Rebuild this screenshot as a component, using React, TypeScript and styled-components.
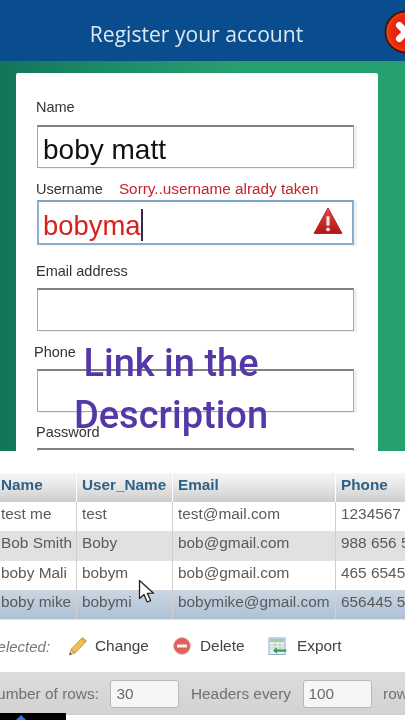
import React from 'react';
import styled, { createGlobalStyle } from 'styled-components';

const GlobalStyle = createGlobalStyle`
  html, body {
    margin: 0;
    padding: 0;
    background: #fff;
  }
`;

const rows = [
  { name: 'test me', user: 'test', email: 'test@mail.com', phone: '1234567', tone: 'plain' },
  { name: 'Bob Smith', user: 'Boby', email: 'bob@gmail.com', phone: '988 656 565', tone: 'grey' },
  { name: 'boby Mali', user: 'bobym', email: 'bob@gmail.com', phone: '465 6545', tone: 'plain' },
  { name: 'boby mike', user: 'bobymi', email: 'bobymike@gmail.com', phone: '656445 565', tone: 'picked' },
];

const CloseIcon = () => (
  <svg width="44" height="44" viewBox="0 0 46 46">
    <defs>
      <radialGradient id="closeFill" cx="0.55" cy="0.5" r="0.6">
        <stop offset="0" stopColor="#f01010" />
        <stop offset="0.7" stopColor="#e62a0c" />
        <stop offset="1" stopColor="#ee6a10" />
      </radialGradient>
    </defs>
    <circle cx="23" cy="23" r="21.5" fill="url(#closeFill)" stroke="#4a1410" strokeWidth="2" />
    <path d="M16 16 L30 30 M30 16 L16 30" stroke="#fff" strokeWidth="7" strokeLinecap="round" />
  </svg>
);

const WarningIcon = () => (
  <svg width="30" height="28" viewBox="0 0 30 28">
    <defs>
      <linearGradient id="warnFill" x1="0" y1="0" x2="0" y2="1">
        <stop offset="0" stopColor="#e04848" />
        <stop offset="1" stopColor="#b01818" />
      </linearGradient>
    </defs>
    <path d="M15 1 L29 26.5 L1 26.5 Z" fill="url(#warnFill)" stroke="#c02020" strokeLinejoin="round" />
    <rect x="13.4" y="9" width="3.2" height="10" rx="1.4" fill="#f4e0e0" />
    <circle cx="15" cy="22.4" r="1.9" fill="#f4e0e0" />
  </svg>
);

const PencilIcon = () => (
  <svg width="20" height="20" viewBox="0 0 20 20">
    <path d="M14.5 1.5 L18.5 5 L7 17 L3 13.5 Z" fill="#efc24a" stroke="#c8922a" strokeWidth="0.9" />
    <path d="M3 13.5 L7 17 L1.4 19 Z" fill="#ecc79a" stroke="#a87830" strokeWidth="0.6" />
    <path d="M1.4 19 L2.1 16.8 L3.7 18.2 Z" fill="#4a3418" />
    <path d="M14.5 1.5 L18.5 5 L17 6.5 L13 3 Z" fill="#e8a24c" />
  </svg>
);

const DeleteIcon = () => (
  <svg width="18" height="18" viewBox="0 0 18 18">
    <circle cx="9" cy="9" r="8.3" fill="#e2605a" stroke="#d8a098" strokeWidth="0.8" />
    <rect x="4" y="7.4" width="10" height="3.2" rx="0.6" fill="#fbeeee" />
  </svg>
);

const ExportIcon = () => (
  <svg width="19" height="19" viewBox="0 0 19 19">
    <rect x="1" y="1" width="16" height="16.5" fill="#e8f0f4" stroke="#8cb0c8" />
    <rect x="2" y="2" width="14" height="3" fill="#a8c8a8" />
    <path d="M2 8 H16 M2 11 H16 M7 5 V15 M12 5 V15" stroke="#b0c8b8" strokeWidth="0.8" />
    <path d="M5 13.6 L9 10.6 V12.6 H18.4 V14.8 H9 V16.8 Z" fill="#3f9a48" />
  </svg>
);

const CursorIcon = () => (
  <svg width="18" height="26" viewBox="0 0 18 26">
    <path
      d="M1.5 1.5 L1.5 19.5 L6 15.6 L9.2 23 L12.6 21.6 L9.4 14.4 L15.5 14.2 Z"
      fill="#fff"
      stroke="#222"
      strokeWidth="1.3"
      strokeLinejoin="round"
    />
  </svg>
);

const App: React.FC = () => {
  return (
    <Page>
      <GlobalStyle />
      <Header>
        <Title>Register your account</Title>
        <CloseButton>
          <CloseIcon />
        </CloseButton>
      </Header>

      <FormBand>
        <Card>
          <Label $top={0} $bottom={10}>Name</Label>
          <Field>boby matt</Field>

          <Label $top={13} $bottom={3}>
            Username <ErrorText>Sorry..username alrady taken</ErrorText>
          </Label>
          <Field $invalid>
            bobyma<Caret />
            <FieldIcon>
              <WarningIcon />
            </FieldIcon>
          </Field>

          <Label $top={18} $bottom={9}>Email address</Label>
          <Field />

          <Label $top={13} $bottom={9} $shift={-3}>Phone</Label>
          <Field />

          <Label $top={12} $bottom={8}>Password</Label>
          <Field />
        </Card>
        <Overlay>
          Link in the
          <br />
          Description
        </Overlay>
      </FormBand>

      <TableWrap>
        <HeadRow>
          <HeadCell>Name</HeadCell>
          <HeadCell>User_Name</HeadCell>
          <HeadCell>Email</HeadCell>
          <HeadCell>Phone</HeadCell>
        </HeadRow>
        {rows.map((row) => (
          <BodyRow key={row.user} $tone={row.tone}>
            <BodyCell>{row.name}</BodyCell>
            <BodyCell>{row.user}</BodyCell>
            <BodyCell>{row.email}</BodyCell>
            <BodyCell>{row.phone}</BodyCell>
          </BodyRow>
        ))}
        <Pointer>
          <CursorIcon />
        </Pointer>
      </TableWrap>

      <ActionBar>
        <SelectedText>With selected:</SelectedText>
        <Action $width={105} $gap={7}>
          <PencilIcon />
          Change
        </Action>
        <Action $width={95} $gap={9}>
          <DeleteIcon />
          Delete
        </Action>
        <Action $width={80} $gap={10}>
          <ExportIcon />
          Export
        </Action>
      </ActionBar>

      <RowsBar>
        <BarText>Number of rows:</BarText>
        <CountInput value="30" readOnly />
        <BarText>Headers every</BarText>
        <CountInput value="100" readOnly />
        <BarText>rows</BarText>
      </RowsBar>

      <BlackTab>
        <BlueBump />
      </BlackTab>
    </Page>
  );
};

const Page = styled.div`
  position: relative;
  width: 405px;
  height: 720px;
  overflow: hidden;
  background: #fff;
  font-family: 'Liberation Sans', Arial, sans-serif;
  filter: blur(0.4px);
`;

const Header = styled.header`
  position: relative;
  height: 61px;
  background: #0a4d8e;
  display: flex;
  align-items: center;
  justify-content: center;
  padding-right: 12px;
  box-sizing: border-box;
`;

const Title = styled.h1`
  margin: 0;
  padding-top: 6px;
  font-family: 'Open Sans', sans-serif;
  font-size: 21.1px;
  font-weight: 400;
  color: #dce8f0;
`;

const CloseButton = styled.div`
  position: absolute;
  left: 384px;
  top: 10px;
  width: 44px;
  height: 44px;
`;

const FormBand = styled.section`
  position: relative;
  height: 390px;
  padding: 12px 27px 0 16px;
  box-sizing: border-box;
  overflow: hidden;
  background: linear-gradient(90deg, #12755a 0%, #1b8a66 25%, #27a070 60%, #27a070 100%);
`;

const Card = styled.div`
  height: 378px;
  background: #fff;
  border-radius: 2px 2px 0 0;
  padding: 26px 24px 0 21px;
  box-sizing: border-box;
  overflow: hidden;
`;

const Label = styled.div<{ $top: number; $bottom: number; $shift?: number }>`
  height: 16px;
  line-height: 16px;
  margin: ${(p) => p.$top}px 0 ${(p) => p.$bottom}px ${(p) => p.$shift || -1}px;
  font-size: 14.5px;
  color: #333;
  white-space: nowrap;
`;

const ErrorText = styled.span`
  margin-left: 12px;
  font-size: 15.3px;
  color: #c8202a;
`;

const Field = styled.div<{ $invalid?: boolean }>`
  position: relative;
  height: ${(p) => (p.$invalid ? 45 : 43)}px;
  width: 317px;
  box-sizing: border-box;
  padding-left: ${(p) => (p.$invalid ? 4 : 5)}px;
  line-height: ${(p) => (p.$invalid ? 47 : 46)}px;
  font-size: ${(p) => (p.$invalid ? 27.4 : 28)}px;
  white-space: nowrap;
  color: ${(p) => (p.$invalid ? '#d8201c' : '#111')};
  background: #fff;
  border: ${(p) => (p.$invalid ? '2px solid #8aaecb' : '1px solid #a8a8a8')};
  border-top: 2px solid ${(p) => (p.$invalid ? '#7fa4c2' : '#808080')};
  box-shadow: 3px 1px 0 #f0f0f0;
`;

const Caret = styled.span`
  display: inline-block;
  width: 1.5px;
  height: 32px;
  margin-left: 1px;
  vertical-align: -6px;
  background: #3a2a4a;
`;

const FieldIcon = styled.span`
  position: absolute;
  top: 5px;
  right: 9px;
  display: flex;
`;

const Overlay = styled.div`
  position: absolute;
  top: 276px;
  left: 0;
  width: 342px;
  text-align: center;
  font-family: Roboto, sans-serif;
  font-size: 38px;
  font-weight: 500;
  line-height: 52px;
  color: #5538a8;
`;

const TableWrap = styled.div`
  position: relative;
  margin-top: 22px;
  width: 470px;
  border-bottom: 1px solid #dfe6ec;
`;

const gridColumns = `
  display: grid;
  grid-template-columns: 77px 96px 163px 134px;
`;

const HeadRow = styled.div`
  ${gridColumns}
  height: 29px;
  background: linear-gradient(180deg, #f6f6f6 0%, #e6e6e6 45%, #cdcdcd 100%);
`;

const HeadCell = styled.div`
  padding: 0 0 0 5px;
  line-height: 23px;
  font-size: 15.3px;
  font-weight: 700;
  color: #2f6186;
  border-right: 1px solid #fff;
  white-space: nowrap;

  &:first-child {
    padding-left: 1px;
  }
`;

const toneBackground: Record<string, string> = {
  plain: '#fff',
  grey: '#e1e1e1',
  picked: 'linear-gradient(180deg, #cbd6e1 0%, #aec1d5 100%)',
};

const BodyRow = styled.div<{ $tone: string }>`
  ${gridColumns}
  height: 29.3px;
  background: ${(p) => toneBackground[p.$tone]};
`;

const BodyCell = styled.div`
  padding-left: 5px;
  line-height: 23px;
  font-size: 15.4px;
  color: #5a5a5a;
  border-right: 1px solid #cfcfcf;
  white-space: nowrap;
  overflow: hidden;

  &:first-child {
    padding-left: 1px;
  }
`;

const Pointer = styled.div`
  position: absolute;
  left: 138px;
  top: 106px;
  display: flex;
`;

const ActionBar = styled.div`
  display: flex;
  align-items: center;
  height: 52px;
  margin-left: -44px;
  white-space: nowrap;
`;

const SelectedText = styled.span`
  width: 112px;
  font-size: 15px;
  font-style: italic;
  color: #777;
`;

const Action = styled.span<{ $width: number; $gap: number }>`
  display: flex;
  align-items: center;
  gap: ${(p) => p.$gap}px;
  width: ${(p) => p.$width}px;
  font-size: 15.4px;
  color: #444;
`;

const RowsBar = styled.div`
  display: flex;
  align-items: center;
  gap: 11.5px;
  height: 43px;
  margin-left: -14px;
  white-space: nowrap;
  background: linear-gradient(180deg, #dcdcdc 0%, #d2d2d2 100%);
`;

const BarText = styled.span`
  font-size: 15.4px;
  color: #707070;
`;

const CountInput = styled.input`
  width: 69px;
  height: 28px;
  flex: none;
  box-sizing: border-box;
  padding: 0 5px;
  font-family: 'Liberation Sans', Arial, sans-serif;
  font-size: 15.4px;
  color: #6a6a6a;
  background: #f6f6f6;
  border: 1px solid #b8b8b8;
  border-radius: 3px;
`;

const BlackTab = styled.div`
  position: absolute;
  left: 0;
  bottom: 0;
  width: 66px;
  height: 7px;
  overflow: hidden;
  background: #000;
`;

const BlueBump = styled.div`
  position: absolute;
  left: 16px;
  top: 4px;
  width: 10px;
  height: 10px;
  background: #3f6fd0;
  transform: rotate(45deg);
`;

export default App;
